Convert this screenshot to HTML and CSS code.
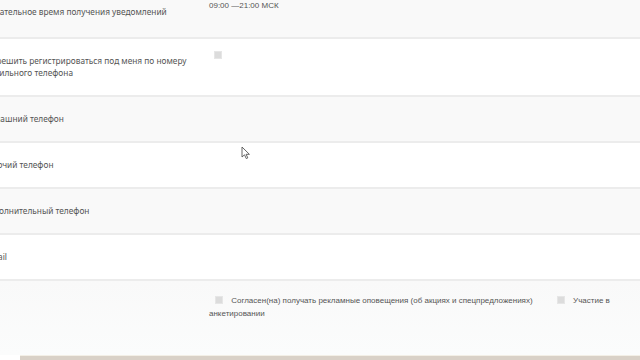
FILE: index.html
```html
<!DOCTYPE html>
<html lang="ru">
<head>
    <meta charset="UTF-8" />
    <title>Настройки профиля</title>
    <link rel="stylesheet" href="styles.css">
</head>
<body>

<div class="form">
    <div class="row shade first">
        <div class="label">Желательное время получения уведомлений</div>
        <div class="value">09:00 —21:00 МСК</div>
    </div>
    <div class="row">
        <div class="label">Разрешить регистрироваться под меня по номеру мобильного телефона</div>
        <div class="value"><input type="checkbox" class="check" checked disabled></div>
    </div>
    <div class="row shade">
        <div class="label">Домашний телефон</div>
        <div class="value"></div>
    </div>
    <div class="row">
        <div class="label">Рабочий телефон</div>
        <div class="value"></div>
    </div>
    <div class="row shade">
        <div class="label">Дополнительный телефон</div>
        <div class="value"></div>
    </div>
    <div class="row">
        <div class="label">E-mail</div>
        <div class="value"></div>
    </div>
    <div class="row shade last">
        <div class="label"></div>
        <div class="value options">
            <input type="checkbox" class="check" checked disabled>
            <span class="opt">Согласен(на) получать рекламные оповещения (об акциях и спецпредложениях)</span>
            <input type="checkbox" class="check gap" checked disabled>
            <span class="opt">Участие в анкетировании</span>
        </div>
    </div>
</div>
<div class="footer-bar"></div>

<!-- mouse pointer over the page -->
<svg class="cursor" width="10" height="14" viewBox="0 0 10 14">
    <path d="M1 1 L1 11 L3.5 8.8 L5.3 12.6 L6.8 11.9 L5.1 8.3 L8.4 8.3 Z" fill="#fff" stroke="#555" stroke-width="0.9" stroke-linejoin="round"/>
</svg>

</body>
</html>
```

FILE: styles.css
```css
body {
    margin: 0;
    background: #fff;
    color: #555;
    font-family: 'Liberation Sans', Arial, sans-serif;
    overflow: hidden;
    height: 360px;
    position: relative;
}
.form {
    margin-top: -11px;
    margin-left: -17px;
    width: 657px;
}
.row {
    display: flex;
    border-bottom: 2px solid #ececec;
}
.shade {
    background: #f9f9f9;
}
.label {
    width: 226px;
    flex-shrink: 0;
    padding: 16px 8px 16px 0;
    box-sizing: border-box;
    font-family: 'Noto Sans', sans-serif;
    font-size: 8.3px;
    line-height: 12px;
}
.first .label {
    padding-top: 17px;
    padding-bottom: 19px;
}
.value {
    flex: 1;
    padding: 11px 20px 0 0;
    font-size: 8px;
    line-height: 12px;
}
.last {
    border-bottom: none;
    height: 74px;
    background: linear-gradient(#f9f9f9, #fbfcfc);
}
.last .value {
    padding-top: 13px;
    line-height: 13px;
}
.check {
    appearance: none;
    -webkit-appearance: none;
    width: 8px;
    height: 8px;
    margin: 0 0 0 5px;
    background: #dcdcdc;
    border: 1px solid #e6e6e6;
    box-sizing: border-box;
    vertical-align: -1px;
}
.options .check {
    margin-left: 6px;
}
.options .opt {
    margin-left: 6px;
}
.options .gap {
    margin-left: 22px;
}
.footer-bar {
    margin-left: 20px;
    height: 5px;
    background: #d9d1c7;
    border-top: 1px solid #f3efe6;
}
.cursor {
    position: absolute;
    left: 241px;
    top: 146px;
}
```
